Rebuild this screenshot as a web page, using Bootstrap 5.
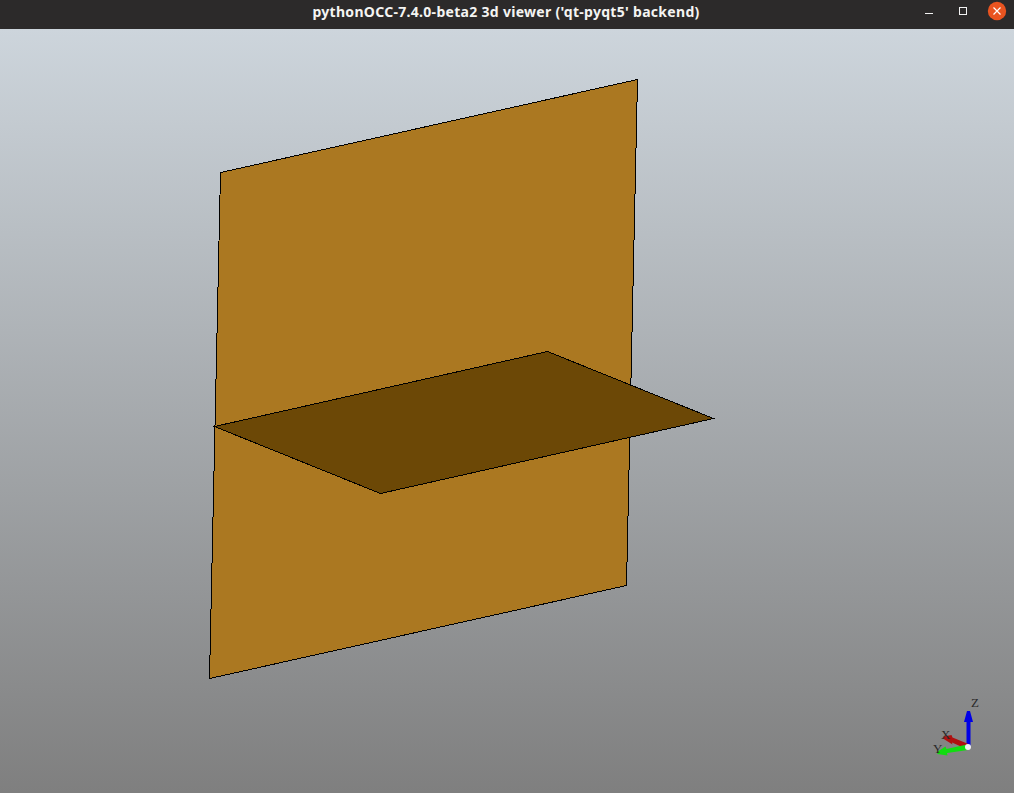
<!DOCTYPE html>
<html lang="en">
<head>
<meta charset="utf-8">
<title>pythonOCC viewer</title>
<link rel="stylesheet" href="https://cdn.jsdelivr.net/npm/bootstrap@5.3.0/dist/css/bootstrap.min.css">
<style>
html,body{height:100%;margin:0;overflow:hidden;background:#7f7f7f}
.win-shell{width:1014px;height:793px}
.title-bar{height:29px;background:#2c2a2a;flex:none;position:relative}
.title-text{font-family:"Noto Sans","Open Sans",sans-serif;font-weight:700;font-size:14px;line-height:1;color:#f4f4f2;white-space:nowrap;letter-spacing:.3px;transform:translate(-1px,-3px)}
.win-controls{position:absolute;right:0;top:0;width:100px;height:29px}
.win-controls svg{display:block}
.view-area{flex:1 1 auto;background:linear-gradient(180deg,#cdd5dc 0%,#7f7f7f 100%);min-height:0}
.view-area svg{display:block}
.axis-label{font-family:"Liberation Serif",serif;font-size:13px;fill:#2a2a2a}
</style>
</head>
<body>
<div class="win-shell d-flex flex-column">
  <div class="title-bar d-flex align-items-center justify-content-center">
    <span class="title-text">pythonOCC-7.4.0-beta2 3d viewer ('qt-pyqt5' backend)</span>
    <div class="win-controls">
      <svg width="100" height="29" viewBox="914 0 100 29">
        <rect x="925" y="13" width="8" height="1" fill="#f2f2f2"/>
        <rect x="959.500" y="7.500" width="7" height="7" fill="none" stroke="#f2f2f2"/>
        <circle cx="997" cy="11" r="9.200" fill="#e95420"/>
        <path d="M993.500 7.500l7 7M1000.500 7.500l-7 7" stroke="#fff" stroke-width="1.200" fill="none"/>
      </svg>
    </div>
  </div>
  <div class="view-area">
    <svg width="1014" height="764" viewBox="0 29 1014 764">
      <g shape-rendering="crispEdges" stroke="#000" stroke-width="1">
        <polygon points="220.5,172.5 637.5,79.5 626.5,585.5 209.5,678.5" fill="#ab7821"/>
        <polygon points="214.5,426.5 547.5,351.5 713.5,418.5 380.5,493.500" fill="#6c4806"/>
      </g>
      <g>
        <path d="M966.500 747V722h-2.500l3-11h3l3 11h-2.500v25z" fill="#0000e6"/>
        <path d="M966.500 749 L952 742.500 L952.500 744.500 L943 738.500 L943.500 736.500 L951.500 735 L952.500 737.500 L968.500 744z" fill="#b01010"/>
        <path d="M968 750 L947 753 L947.500 755.500 L937.500 754 L937 752 L945.500 746.500 L946.500 749 L967 744.500z" fill="#10dd10"/>
        <circle cx="968" cy="747" r="3" fill="#f0f0f0"/>
        <text class="axis-label" x="971" y="707">Z</text>
        <text class="axis-label" x="941" y="739">X</text>
        <text class="axis-label" x="933" y="753">Y</text>
      </g>
    </svg>
  </div>
</div>
<script src="https://cdn.jsdelivr.net/npm/bootstrap@5.3.0/dist/js/bootstrap.bundle.min.js"></script>
</body>
</html>
